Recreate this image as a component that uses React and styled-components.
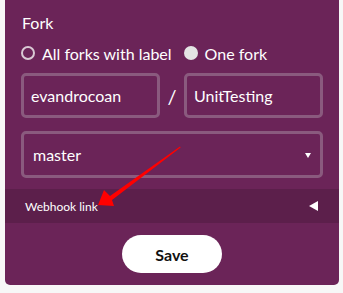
import React from "react";
import styled, { createGlobalStyle } from "styled-components";

const GlobalStyle = createGlobalStyle`
  body {
    margin: 0;
    background: #f7f7f7;
    font-family: Lato, "Open Sans", sans-serif;
  }
`;

const Page = styled.div`
  position: relative;
  width: 343px;
  height: 293px;
`;

const StyledPanel = styled.div`
  margin-left: 5px;
  width: 334px;
  height: 285px;
  background: #6b2458;
  border-radius: 0 0 5px 5px;
  color: #ffffff;
  display: flex;
  flex-direction: column;
`;

const StyledBody = styled.div`
  padding: 13px 16px 0 16px;
  display: flex;
  flex-direction: column;
`;

const StyledTitle = styled.div`
  font-size: 16px;
  line-height: 20px;
  margin-left: 1px;
`;

const StyledRadioRow = styled.div`
  display: flex;
  align-items: center;
  margin-top: 10px;
  height: 20px;
  font-size: 16px;
`;

const StyledRadio = styled.span`
  width: 14px;
  height: 14px;
  border-radius: 50%;
  box-sizing: border-box;
  flex-shrink: 0;
  border: ${(p) => (p.filled ? "none" : "2.5px solid #d9c9d4")};
  background: ${(p) => (p.filled ? "#e4e4e4" : "transparent")};
  margin-left: ${(p) => (p.filled ? "12px" : "0")};
  margin-right: 7px;
`;

const StyledInRow = styled.div`
  display: flex;
  align-items: center;
  margin-top: 10px;
`;

const StyledInput = styled.div`
  width: 139px;
  height: 45px;
  box-sizing: border-box;
  border: 3px solid #8a5a7e;
  border-radius: 5px;
  padding-left: 7px;
  display: flex;
  align-items: center;
  font-size: 16px;
`;

const StyledSlash = styled.span`
  width: 24px;
  text-align: center;
  font-size: 20px;
`;

const StyledSelect = styled.div`
  margin-top: 13px;
  height: 47px;
  box-sizing: border-box;
  border: 3px solid #8a5a7e;
  border-radius: 5px;
  padding: 0 9px 0 9px;
  display: flex;
  align-items: center;
  justify-content: space-between;
  font-size: 16px;
`;

const StyledCaret = styled.span`
  width: 0;
  height: 0;
  border-left: 3px solid transparent;
  border-right: 3px solid transparent;
  border-top: 5px solid #ffffff;
  margin-top: 1px;
`;

const StyledWebhook = styled.div`
  margin-top: 11px;
  height: 34px;
  background: #5c1f4b;
  display: flex;
  align-items: center;
  justify-content: space-between;
  padding: 0 21px 0 20px;
  font-size: 12px;
`;

const StyledLeftTri = styled.span`
  width: 0;
  height: 0;
  border-top: 5px solid transparent;
  border-bottom: 5px solid transparent;
  border-right: 9px solid #ffffff;
`;

const StyledFooter = styled.div`
  display: flex;
  justify-content: center;
  padding-top: 12px;
`;

const StyledSave = styled.button`
  width: 100px;
  height: 38px;
  border: none;
  border-radius: 19px;
  background: #ffffff;
  color: #111111;
  font-family: Lato, sans-serif;
  font-weight: bold;
  font-size: 16px;
  padding: 0;
`;

const StyledArrow = styled.svg`
  position: absolute;
  left: 0;
  top: 0;
  pointer-events: none;
`;

const App = () => {
  return (
    <Page>
      <GlobalStyle />
      <StyledPanel>
        <StyledBody>
          <StyledTitle>Fork</StyledTitle>
          <StyledRadioRow>
            <StyledRadio />
            All forks with label
            <StyledRadio filled />
            One fork
          </StyledRadioRow>
          <StyledInRow>
            <StyledInput>evandrocoan</StyledInput>
            <StyledSlash>/</StyledSlash>
            <StyledInput>UnitTesting</StyledInput>
          </StyledInRow>
          <StyledSelect>
            master
            <StyledCaret />
          </StyledSelect>
        </StyledBody>
        <StyledWebhook>
          <span>Webhook link</span>
          <StyledLeftTri />
        </StyledWebhook>
        <StyledFooter>
          <StyledSave>Save</StyledSave>
        </StyledFooter>
      </StyledPanel>
      <StyledArrow width="343" height="293">
        <polygon
          points="180,146.5 180.6,147.5 112,200 114,206 98,205 104,190 110,196"
          fill="#ff0000"
        />
      </StyledArrow>
    </Page>
  );
};

export default App;
